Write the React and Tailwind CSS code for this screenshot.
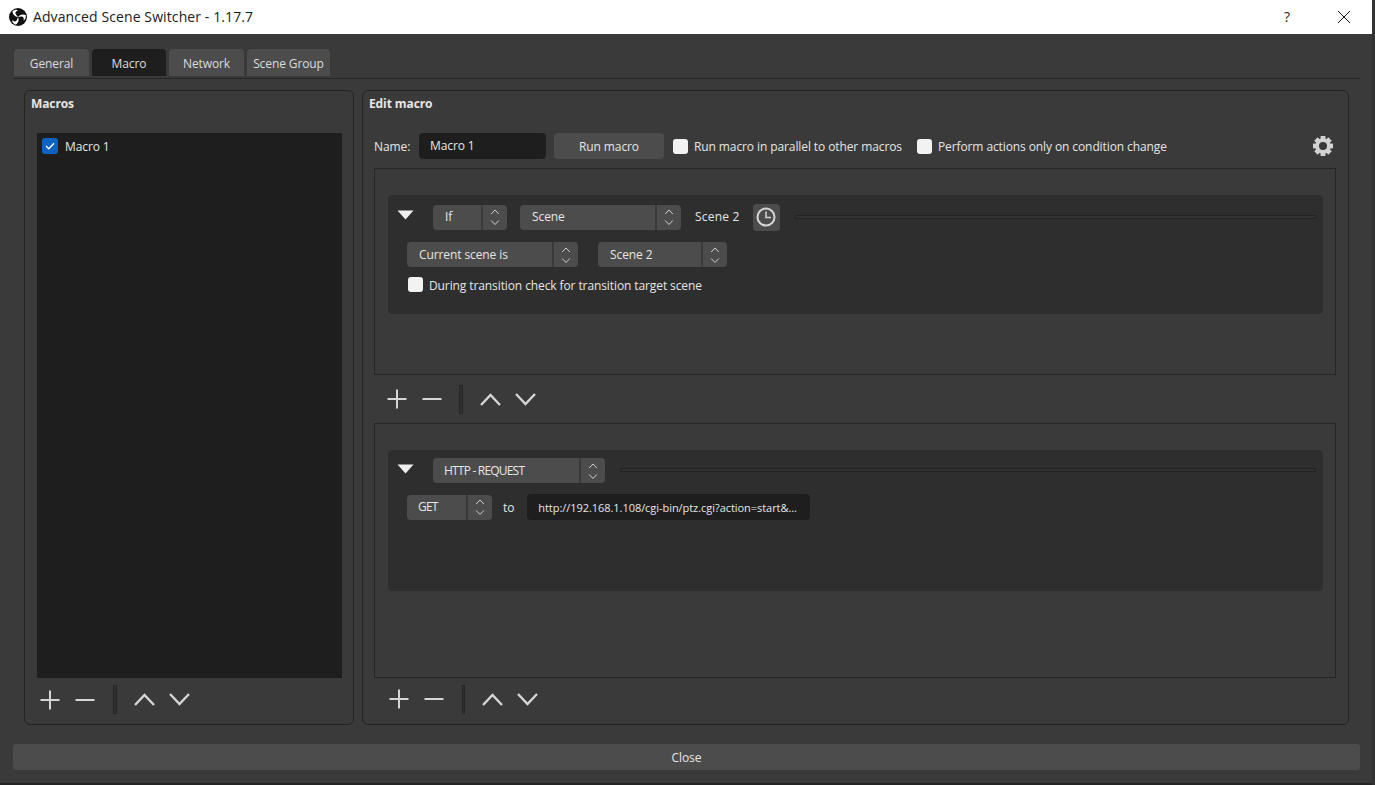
import React from "react";

function Updown() {
  return (
    <div className="w-[26px] h-full border-l-2 border-[#3a3a3a] flex items-center justify-center shrink-0">
      <svg width="10" height="18" viewBox="0 0 10 18" fill="none" stroke="#d0d0d0" strokeWidth="1">
        <path d="M1.2 6 L5 2 L8.8 6" />
        <path d="M1.2 12.5 L5 16.5 L8.8 12.5" />
      </svg>
    </div>
  );
}

function Select({ label, w, tight }) {
  return (
    <div className={`${w} h-[25px] rounded-[4px] bg-[#4c4c4c] flex items-center shrink-0`}>
      <span className={`flex-1 text-[#e6e6e6] whitespace-nowrap ${tight ? "pl-[11px] tracking-[-0.8px]" : "pl-3"}`}>{label}</span>
      <Updown />
    </div>
  );
}

function Check({ label }) {
  return (
    <div className="flex items-center gap-[6px] shrink-0">
      <div className="w-[15px] h-[15px] rounded-[3px] bg-[#f2f2f2]" />
      <span className="text-[#e6e6e6] whitespace-nowrap pt-[2px]">{label}</span>
    </div>
  );
}

function Triangle() {
  return (
    <svg width="17" height="10" viewBox="0 0 17 10" className="shrink-0 -ml-[1px] mr-[1px] -mt-[4px]">
      <path d="M0.5 0.5 H16.5 L8.5 9.5 Z" fill="#efefef" />
    </svg>
  );
}

function Toolbar({ className, sepMl, sepW }) {
  const s = { fill: "none", stroke: "#d6d6d6", strokeWidth: 2 };
  return (
    <div className={`flex items-center ${className}`}>
      <svg width="20" height="20" viewBox="0 0 20 20" className="shrink-0" {...s}><path d="M10 0.5 V19.5 M0.5 10 H19.5" /></svg>
      <svg width="20" height="4" viewBox="0 0 20 4" className="shrink-0 ml-[15px]" {...s}><path d="M0.5 2 H19.5" /></svg>
      <div className={`${sepW} h-[29px] ${sepMl} bg-[#303030] border border-[#262626] shrink-0`} />
      <svg width="21" height="13" viewBox="0 0 21 13" className="shrink-0 ml-[17px]" {...s} strokeWidth="2.4"><path d="M1 12 L10.5 2 L20 12" /></svg>
      <svg width="21" height="13" viewBox="0 0 21 13" className="shrink-0 ml-[14px]" {...s} strokeWidth="2.4"><path d="M1 1 L10.5 11 L20 1" /></svg>
    </div>
  );
}

function Tab({ label, w, active }) {
  return (
    <div className={`${w} h-[27px] pt-[2px] rounded-t-[4px] flex items-center justify-center text-[#dcdcdc] whitespace-nowrap ${active ? "bg-[#1e1e1e]" : "bg-[#4c4c4c]"}`}>
      {label}
    </div>
  );
}

function ObsLogo() {
  const blade = "M9 9 C6.6 7.4 5.2 5.4 6.4 1.4 C8.8 0.9 11.4 1.5 12 3.2 C10.4 2.6 8.2 3.4 8.2 5.4 C8.2 6.8 8.8 7.8 9 9Z";
  return (
    <svg width="18" height="18" viewBox="0 0 18 18">
      <circle cx="9" cy="9" r="9" fill="#111" />
      <path d={blade} fill="#fff" transform="rotate(-25 9 9)" />
      <path d={blade} fill="#fff" transform="rotate(95 9 9)" />
      <path d={blade} fill="#fff" transform="rotate(215 9 9)" />
    </svg>
  );
}

function Gear() {
  const angles = [0, 45, 90, 135, 180, 225, 270, 315];
  return (
    <svg width="20" height="20" viewBox="0 0 20 20" className="ml-auto mr-[3px] shrink-0" fill="#d2d2d2">
      {angles.map((a) => (
        <rect key={a} x="7.6" y="0" width="4.8" height="5" transform={`rotate(${a} 10 10)`} />
      ))}
      <circle cx="10" cy="10" r="5.9" fill="none" stroke="#d2d2d2" strokeWidth="3.8" />
    </svg>
  );
}

export default function App() {
  return (
    <div
      className="w-[1375px] h-[785px] overflow-hidden bg-[#3a3a3a] flex flex-col text-[12px] leading-none tracking-[-0.1px] border-r-[3px] border-[#333333]"
      style={{ fontFamily: '"Open Sans", "Noto Sans", sans-serif' }}
    >
      {/* Title bar */}
      <div className="h-[34px] bg-white flex items-center shrink-0 text-black">
        <div className="ml-[9px] w-[18px] h-[18px]"><ObsLogo /></div>
        <span className="ml-[6px] text-[14px] text-[#1a1a1a] tracking-[0.1px]">Advanced Scene Switcher - 1.17.7</span>
        <span className="ml-auto mr-[47px] text-[14px] text-[#222]">?</span>
        <svg width="14" height="14" viewBox="0 0 14 14" className="mr-[21px]" fill="none" stroke="#111" strokeWidth="1">
          <path d="M1 1 L13 13 M13 1 L1 13" />
        </svg>
      </div>

      {/* Body */}
      <div className="flex-1 flex flex-col pl-[13px] pr-[12px] min-h-0 border-b-[2px] border-[#242424]">
        <div className="pt-[15px] pl-[1px] flex gap-[3px] h-[45px] shrink-0 border-b border-[#262626]">
          <Tab label="General" w="w-[75px]" />
          <Tab label="Macro" w="w-[74px]" active />
          <Tab label="Network" w="w-[75px]" />
          <Tab label="Scene Group" w="w-[83px]" />
        </div>

        <div className="flex gap-[8px] mt-[11px] pl-[11px] pr-[11px] h-[635px] shrink-0">
          {/* Macros */}
          <section className="w-[330px] h-full rounded-[6px] border border-[#232323] shrink-0 pl-[12px] pr-[11px] pt-[7px] flex flex-col">
            <h2 className="font-bold text-[#e6e6e6] -ml-[6px] h-[35px]">Macros</h2>
            <div className="h-[545px] bg-[#1e1e1e] pt-[5px] pl-[5px] shrink-0">
              <div className="flex items-center gap-[7px]">
                <div className="w-[16px] h-[16px] rounded-[3px] bg-[#0f62c0] flex items-center justify-center">
                  <svg width="10" height="8" viewBox="0 0 10 8" fill="none" stroke="#fff" strokeWidth="1.3"><path d="M1 4 L3.8 6.8 L9 1.2" /></svg>
                </div>
                <span className="text-[#e6e6e6] pt-[2px]">Macro 1</span>
              </div>
            </div>
            <Toolbar className="mt-[7px] pl-[3px]" sepMl="ml-[18px]" sepW="w-[4px]" />
          </section>

          {/* Edit macro */}
          <section className="flex-1 h-full rounded-[6px] border border-[#232323] pl-[11px] pr-[12px] pt-[7px] flex flex-col min-w-0">
            <h2 className="font-bold text-[#e6e6e6] -ml-[5px] h-[35px]">Edit macro</h2>
            <div className="flex items-center h-[26px] shrink-0">
              <span className="text-[#e6e6e6] w-[45px] pt-[2px]">Name:</span>
              <div className="w-[127px] h-[26px] rounded-[4px] bg-[#1e1e1e] flex items-center pl-[11px] text-[#e6e6e6]">Macro 1</div>
              <div className="ml-[8px] w-[110px] h-[26px] pt-[2px] rounded-[4px] bg-[#4c4c4c] flex items-center justify-center text-[#e6e6e6]">Run macro</div>
              <div className="ml-[9px]"><Check label="Run macro in parallel to other macros" /></div>
              <div className="ml-[15px]"><Check label="Perform actions only on condition change" /></div>
              <Gear />
            </div>

            {/* Conditions */}
            <div className="mt-[9px] h-[207px] border border-[#262626] pt-[26px] pl-[13px] pr-[12px] shrink-0">
              <div className="h-[119px] rounded-[4px] bg-[#2e2e2e] pt-[9px] pl-[10px] pr-[7px]">
                <div className="flex items-center h-[26px]">
                  <Triangle />
                  <div className="ml-[18px]"><Select label="If" w="w-[74px]" /></div>
                  <div className="ml-[13px]"><Select label="Scene" w="w-[161px]" /></div>
                  <span className="ml-[14px] text-[#e6e6e6] whitespace-nowrap tracking-[0.2px]">Scene 2</span>
                  <div className="ml-[13px] w-[27px] h-[27px] rounded-[4px] bg-[#4c4c4c] flex items-center justify-center shrink-0">
                    <svg width="20" height="20" viewBox="0 0 20 20" fill="none" stroke="#d6d6d6" strokeWidth="2"><circle cx="10" cy="10" r="8.5" /><path d="M10 4.5 V10.5 H15" strokeWidth="1.5" /></svg>
                  </div>
                  <div className="ml-[15px] flex-1 h-[4px] bg-[#333] border border-[#222] -mt-[1px]" />
                </div>
                <div className="flex items-center mt-[12px] pl-[9px]">
                  <Select label="Current scene is" w="w-[171px]" />
                  <div className="ml-[20px]"><Select label="Scene 2" w="w-[129px]" /></div>
                </div>
                <div className="mt-[10px] pl-[10px]"><Check label="During transition check for transition target scene" /></div>
              </div>
            </div>

            <Toolbar className="mt-[14px] pl-[13px] h-[20px]" sepMl="ml-[17px]" sepW="w-[4px]" />

            {/* Actions */}
            <div className="mt-[14px] h-[255px] border border-[#262626] pt-[26px] pl-[13px] pr-[12px] shrink-0">
              <div className="h-[141px] rounded-[4px] bg-[#2e2e2e] pt-[8px] pl-[10px] pr-[7px]">
                <div className="flex items-center h-[25px]">
                  <Triangle />
                  <div className="ml-[18px]"><Select label="HTTP - REQUEST" w="w-[172px]" tight /></div>
                  <div className="ml-[15px] flex-1 h-[4px] bg-[#333] border border-[#222] -mt-[1px]" />
                </div>
                <div className="flex items-center mt-[11px] pl-[9px]">
                  <Select label="GET" w="w-[85px]" tight />
                  <span className="ml-[11px] text-[#e6e6e6] pt-[2px]">to</span>
                  <div className="ml-[13px] w-[283px] h-[26px] rounded-[4px] bg-[#1e1e1e] flex items-center pl-[11px] text-[#e6e6e6] text-[11px] tracking-[-0.05px] whitespace-nowrap">
                    http://192.168.1.108/cgi-bin/ptz.cgi?action=start&...
                  </div>
                </div>
              </div>
            </div>

            <Toolbar className="mt-[11px] pl-[15px] h-[20px]" sepMl="ml-[18px]" sepW="w-[3px]" />
          </section>
        </div>

        <div className="mt-[19px] h-[26px] pt-[2px] rounded-[3px] bg-[#4c4c4c] flex items-center justify-center text-[#e6e6e6] shrink-0">
          Close
        </div>
      </div>
    </div>
  );
}
